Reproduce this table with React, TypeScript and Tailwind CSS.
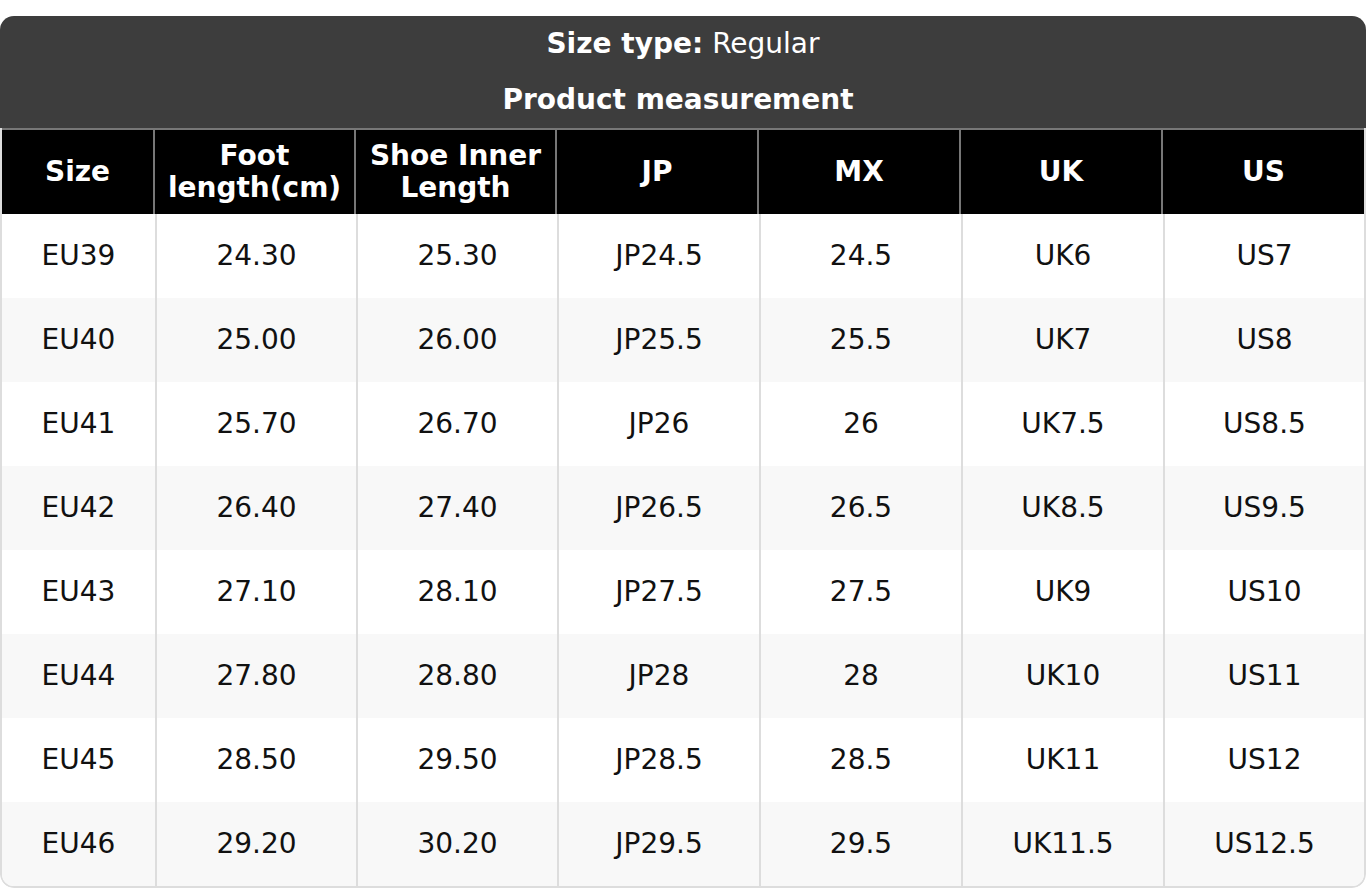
const headers = ['Size', 'Foot\nlength(cm)', 'Shoe Inner\nLength', 'JP', 'MX', 'UK', 'US'];

const rows = [
  ['EU39', '24.30', '25.30', 'JP24.5', '24.5', 'UK6', 'US7'],
  ['EU40', '25.00', '26.00', 'JP25.5', '25.5', 'UK7', 'US8'],
  ['EU41', '25.70', '26.70', 'JP26', '26', 'UK7.5', 'US8.5'],
  ['EU42', '26.40', '27.40', 'JP26.5', '26.5', 'UK8.5', 'US9.5'],
  ['EU43', '27.10', '28.10', 'JP27.5', '27.5', 'UK9', 'US10'],
  ['EU44', '27.80', '28.80', 'JP28', '28', 'UK10', 'US11'],
  ['EU45', '28.50', '29.50', 'JP28.5', '28.5', 'UK11', 'US12'],
  ['EU46', '29.20', '30.20', 'JP29.5', '29.5', 'UK11.5', 'US12.5'],
];

const cols = 'grid grid-cols-[153px_201px_201px_202px_202px_202px_1fr]';

export default function App() {
  return (
    <div className="bg-white pt-[16px] font-['DejaVu_Sans',sans-serif] text-[28px] leading-[32px]">
      <div className="rounded-[14px] overflow-hidden">
        <div className="bg-[#3d3d3d] text-white text-center">
          <div className="h-[56px] flex items-center justify-center">
            <span className="font-bold">Size type:</span>
            <span className="ml-[9px]">Regular</span>
          </div>
          <div className="h-[56px] flex items-center justify-center font-bold pr-[10px]">
            Product measurement
          </div>
        </div>
        <div className="border-x-2 border-b-2 border-[#dddddd] rounded-b-[14px] overflow-hidden">
          <div className={`${cols} bg-black text-white font-bold border-t-2 border-[#777777] -mx-[2px]`}>
            {headers.map((h, i) => (
              <div
                key={i}
                className={`h-[84px] flex items-center justify-center text-center whitespace-pre-line border-l-2 border-[#777777] ${
                  i === headers.length - 1 ? 'border-r-2' : ''
                }`}
              >
                {h}
              </div>
            ))}
          </div>
          {rows.map((r, ri) => (
            <div key={ri} className={`${cols} ${ri % 2 === 1 ? 'bg-[#f8f8f8]' : 'bg-white'} text-[#111111]`}>
              {r.map((c, ci) => (
                <div
                  key={ci}
                  className={`h-[84px] flex items-center justify-center ${ci > 0 ? 'border-l-2 border-[#dddddd]' : ''}`}
                >
                  {c}
                </div>
              ))}
            </div>
          ))}
        </div>
      </div>
    </div>
  );
}
